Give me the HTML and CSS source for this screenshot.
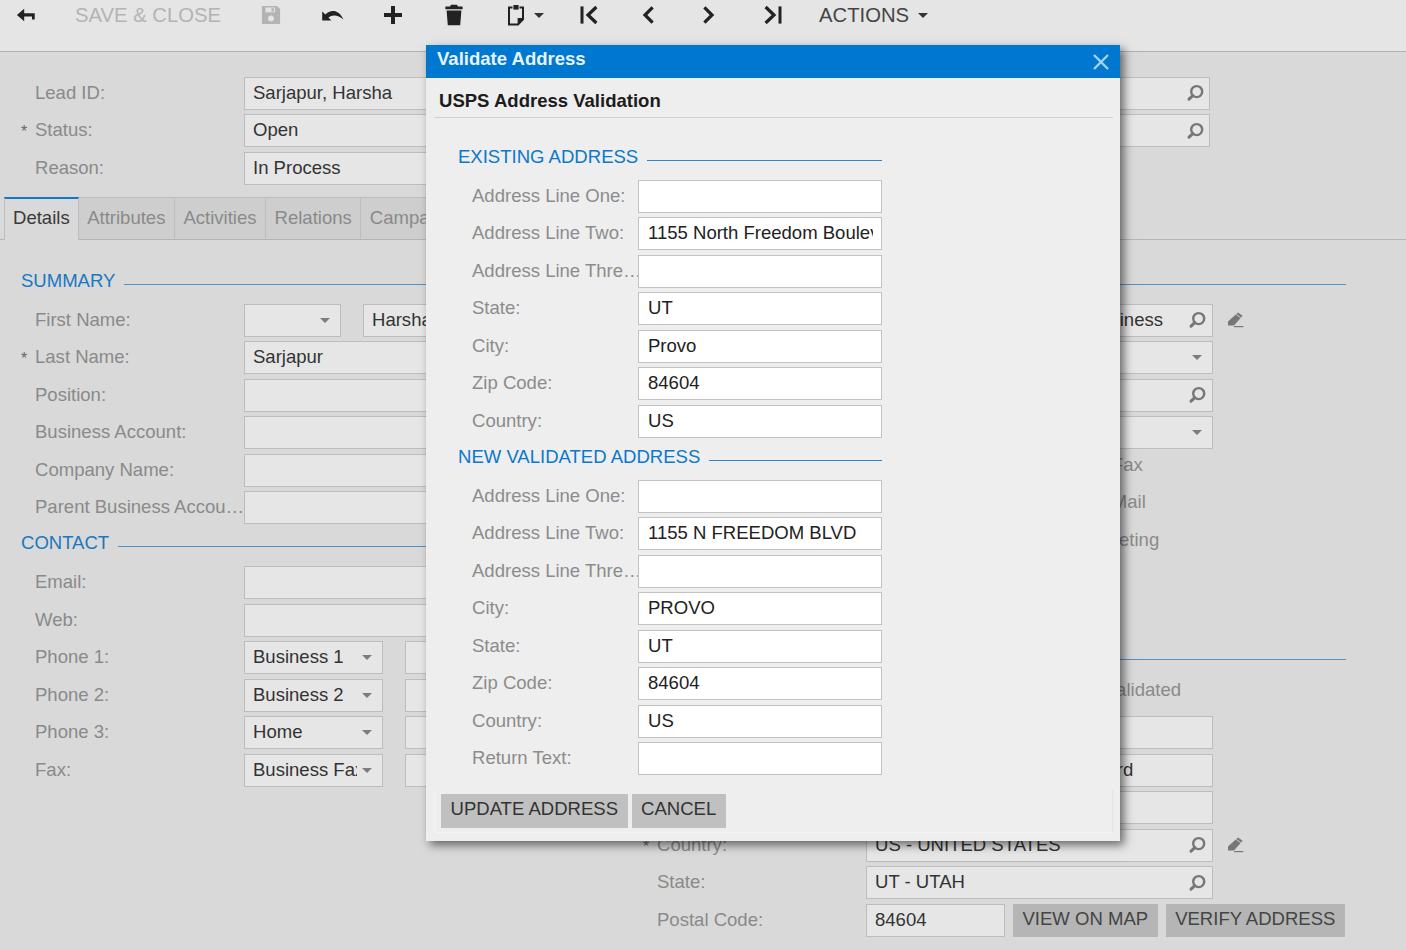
FILE: index.html
```html
<!DOCTYPE html>
<html lang="en">
<head>
<meta charset="utf-8">
<title>Lead - Validate Address</title>
<link rel="stylesheet" href="styles.css">
</head>
<body>
<svg class="defs" aria-hidden="true">
  <symbol id="i-search" viewBox="0 0 18 18"><circle cx="10.7" cy="7.6" r="5.5" fill="none" stroke="currentColor" stroke-width="2.4"/><path d="M6.8 11.6 3 15.2" stroke="currentColor" stroke-width="3" stroke-linecap="round" fill="none"/></symbol>
  <symbol id="i-pencil" viewBox="0 0 18 18"><path d="M12 1.4 16.6 4.8 8 14.6H2V10.6z" fill="currentColor"/><path d="M10.2 3.4 14.8 6.8" stroke="#d9d9d9" stroke-width=".9"/><path d="M8 15.6H17.4" stroke="currentColor" stroke-width="1.2"/></symbol>
  <symbol id="i-back" viewBox="0 0 22 16"><path d="M1 8 9 1.2V6H20.6V13H17.6V9.6H9V14.8z" fill="currentColor"/></symbol>
  <symbol id="i-save" viewBox="0 0 22 22"><path d="M1 1H17.5L21 4.5V21H1zM5 2.8V8H15.5V2.8zM11.5 3.6H14.3V7.2H11.5zM11 11.6A3.2 3.2 0 1 0 11 18A3.2 3.2 0 1 0 11 11.6z" fill="currentColor" fill-rule="evenodd"/></symbol>
  <symbol id="i-undo" viewBox="0 0 22 14"><path d="M.2 3.4V12.6H9.4L6.4 9.6C10 6.4 16 6.4 21.4 11.6 17.4 1.6 8.4 1 3.4 6.6z" fill="currentColor"/></symbol>
  <symbol id="i-plus" viewBox="0 0 20 20"><path d="M8 1H12V8H19V12H12V19H8V12H1V8H8z" fill="currentColor"/></symbol>
  <symbol id="i-trash" viewBox="0 0 18 22"><path d="M6 .8H12L13 2.6H17.6V5.2H.4V2.6H5zM1.6 6.6H16.4L15.2 21.2H2.8z" fill="currentColor"/></symbol>
  <symbol id="i-clip" viewBox="0 0 18 22"><path d="M5.5 3.4H2V20.4H11L16 15.4V3.4H12.5" fill="none" stroke="currentColor" stroke-width="2"/><path d="M6.4 1H11.6V5.6H6.4z" fill="currentColor"/><path d="M10.6 21V14H16.6z" fill="currentColor"/></symbol>
  <symbol id="i-first" viewBox="0 0 20 20"><path d="M2 1.4V18.6" stroke="currentColor" stroke-width="3" fill="none"/><path d="M16.4 2 8 10 16.4 18" stroke="currentColor" stroke-width="3.2" fill="none"/></symbol>
  <symbol id="i-prev" viewBox="0 0 14 20"><path d="M11.6 2.4 4 10 11.6 17.6" stroke="currentColor" stroke-width="3.2" fill="none"/></symbol>
  <symbol id="i-next" viewBox="0 0 14 20"><path d="M2.4 2.4 10 10 2.4 17.6" stroke="currentColor" stroke-width="3.2" fill="none"/></symbol>
  <symbol id="i-last" viewBox="0 0 20 20"><path d="M18 1.4V18.6" stroke="currentColor" stroke-width="3" fill="none"/><path d="M3.6 2 12 10 3.6 18" stroke="currentColor" stroke-width="3.2" fill="none"/></symbol>
  <symbol id="i-close" viewBox="0 0 18 18"><path d="M2 2 16 16M16 2 2 16" stroke="currentColor" stroke-width="2.4" fill="none"/></symbol>
</svg>

<header class="toolbar">
  <button class="tool tool-back"><svg class="ico-back"><use href="#i-back"/></svg></button>
  <button class="tool tool-text tool-save is-off">SAVE &amp; CLOSE</button>
  <button class="tool tool-disk is-off"><svg class="ico-disk"><use href="#i-save"/></svg></button>
  <button class="tool tool-undo"><svg class="ico-undo"><use href="#i-undo"/></svg></button>
  <button class="tool tool-plus"><svg class="ico-plus"><use href="#i-plus"/></svg></button>
  <button class="tool tool-trash"><svg class="ico-trash"><use href="#i-trash"/></svg></button>
  <button class="tool tool-clip"><svg class="ico-clip"><use href="#i-clip"/></svg><i class="caret caret-dark"></i></button>
  <button class="tool tool-first"><svg class="ico-nav"><use href="#i-first"/></svg></button>
  <button class="tool tool-prev"><svg class="ico-nav"><use href="#i-prev"/></svg></button>
  <button class="tool tool-next"><svg class="ico-nav"><use href="#i-next"/></svg></button>
  <button class="tool tool-last"><svg class="ico-nav"><use href="#i-last"/></svg></button>
  <button class="tool tool-text tool-actions">ACTIONS<i class="caret caret-dark"></i></button>
</header>

<main class="page">
  <section class="head-form">
    <div class="fields">
      <div class="row"><label class="label">Lead ID:</label><div class="box box-main"><span class="val">Sarjapur, Harsha</span></div></div>
      <div class="row"><label class="label req">Status:</label><div class="box box-main"><span class="val">Open</span></div></div>
      <div class="row"><label class="label">Reason:</label><div class="box box-main"><span class="val">In Process</span></div></div>
    </div>
    <div class="fields">
      <div class="row row-head-r"><div class="box box-head-r"><span class="val"></span><svg class="ico-search"><use href="#i-search"/></svg></div></div>
      <div class="row row-head-r"><div class="box box-head-r"><span class="val"></span><svg class="ico-search"><use href="#i-search"/></svg></div></div>
    </div>
  </section>

  <nav class="tabs">
    <a class="tab is-active">Details</a>
    <a class="tab">Attributes</a>
    <a class="tab">Activities</a>
    <a class="tab">Relations</a>
    <a class="tab">Campaigns</a>
  </nav>

  <section class="columns">
    <div class="col">
      <h3 class="sec"><span class="sec-text">SUMMARY</span><span class="sec-line"></span></h3>
      <div class="fields">
        <div class="row"><label class="label">First Name:</label><div class="box box-title"><span class="val"></span><i class="caret"></i></div><div class="box box-first"><span class="val">Harsha</span></div></div>
        <div class="row"><label class="label req">Last Name:</label><div class="box box-main"><span class="val">Sarjapur</span></div></div>
        <div class="row"><label class="label">Position:</label><div class="box box-main"></div></div>
        <div class="row"><label class="label">Business Account:</label><div class="box box-main"></div></div>
        <div class="row"><label class="label">Company Name:</label><div class="box box-main"></div></div>
        <div class="row"><label class="label">Parent Business Account:</label><div class="box box-main"></div></div>
      </div>
      <h3 class="sec sec-next"><span class="sec-text">CONTACT</span><span class="sec-line"></span></h3>
      <div class="fields">
        <div class="row"><label class="label">Email:</label><div class="box box-main"></div></div>
        <div class="row"><label class="label">Web:</label><div class="box box-main"></div></div>
        <div class="row"><label class="label">Phone 1:</label><div class="box box-phone"><span class="val">Business 1</span><i class="caret"></i></div><div class="box box-num"></div></div>
        <div class="row"><label class="label">Phone 2:</label><div class="box box-phone"><span class="val">Business 2</span><i class="caret"></i></div><div class="box box-num"></div></div>
        <div class="row"><label class="label">Phone 3:</label><div class="box box-phone"><span class="val">Home</span><i class="caret"></i></div><div class="box box-num"></div></div>
        <div class="row"><label class="label">Fax:</label><div class="box box-phone"><span class="val">Business Fax</span><i class="caret"></i></div><div class="box box-num"></div></div>
      </div>
    </div>

    <div class="col">
      <h3 class="sec"><span class="sec-line"></span></h3>
      <div class="fields">
        <div class="row"><label class="label"></label><div class="box box-wide"><span class="val val-right">Business</span><svg class="ico-search"><use href="#i-search"/></svg></div><svg class="ico-pencil"><use href="#i-pencil"/></svg></div>
        <div class="row"><label class="label"></label><div class="box box-wide"><span class="val"></span><i class="caret"></i></div></div>
        <div class="row"><label class="label"></label><div class="box box-wide"><span class="val"></span><svg class="ico-search"><use href="#i-search"/></svg></div></div>
        <div class="row"><label class="label"></label><div class="box box-wide"><span class="val"></span><i class="caret"></i></div></div>
        <div class="row row-check"><span class="check-text">Do Not Fax</span></div>
        <div class="row row-check"><span class="check-text">Do Not Mail</span></div>
        <div class="row row-check"><span class="check-text">No Marketing</span></div>
      </div>
      <h3 class="sec sec-addr"><span class="sec-line"></span></h3>
      <div class="fields">
        <div class="row row-check"><span class="check-text check-val">Address Validated</span></div>
        <div class="row"><label class="label"></label><div class="box box-wide"></div></div>
        <div class="row"><label class="label"></label><div class="box box-wide"><span class="val">1155 North Freedom Boulevard</span></div></div>
        <div class="row"><label class="label"></label><div class="box box-wide"></div></div>
        <div class="row"><label class="label req">Country:</label><div class="box box-wide"><span class="val">US - UNITED STATES</span><svg class="ico-search"><use href="#i-search"/></svg></div><svg class="ico-pencil"><use href="#i-pencil"/></svg></div>
        <div class="row"><label class="label">State:</label><div class="box box-wide"><span class="val">UT - UTAH</span><svg class="ico-search"><use href="#i-search"/></svg></div></div>
        <div class="row"><label class="label">Postal Code:</label><div class="box box-zip"><span class="val">84604</span></div><button class="btn btn-map">VIEW ON MAP</button><button class="btn btn-verify">VERIFY ADDRESS</button></div>
      </div>
    </div>
  </section>
</main>

<div class="modal" role="dialog">
  <div class="modal-head"><span class="modal-title">Validate Address</span><svg class="ico-close"><use href="#i-close"/></svg></div>
  <div class="modal-sub">USPS Address Validation</div>
  <div class="modal-body">
    <h3 class="msec"><span class="msec-text">EXISTING ADDRESS</span><span class="msec-line"></span></h3>
    <div class="fields">
      <div class="mrow"><label class="mlabel">Address Line One:</label><div class="mbox"></div></div>
      <div class="mrow"><label class="mlabel">Address Line Two:</label><div class="mbox"><span class="val">1155 North Freedom Boulevard</span></div></div>
      <div class="mrow"><label class="mlabel">Address Line Thre…</label><div class="mbox"></div></div>
      <div class="mrow"><label class="mlabel">State:</label><div class="mbox"><span class="val">UT</span></div></div>
      <div class="mrow"><label class="mlabel">City:</label><div class="mbox"><span class="val">Provo</span></div></div>
      <div class="mrow"><label class="mlabel">Zip Code:</label><div class="mbox"><span class="val">84604</span></div></div>
      <div class="mrow"><label class="mlabel">Country:</label><div class="mbox"><span class="val">US</span></div></div>
    </div>
    <h3 class="msec msec-next"><span class="msec-text">NEW VALIDATED ADDRESS</span><span class="msec-line"></span></h3>
    <div class="fields">
      <div class="mrow"><label class="mlabel">Address Line One:</label><div class="mbox"></div></div>
      <div class="mrow"><label class="mlabel">Address Line Two:</label><div class="mbox"><span class="val">1155 N FREEDOM BLVD</span></div></div>
      <div class="mrow"><label class="mlabel">Address Line Thre…</label><div class="mbox"></div></div>
      <div class="mrow"><label class="mlabel">City:</label><div class="mbox"><span class="val">PROVO</span></div></div>
      <div class="mrow"><label class="mlabel">State:</label><div class="mbox"><span class="val">UT</span></div></div>
      <div class="mrow"><label class="mlabel">Zip Code:</label><div class="mbox"><span class="val">84604</span></div></div>
      <div class="mrow"><label class="mlabel">Country:</label><div class="mbox"><span class="val">US</span></div></div>
      <div class="mrow"><label class="mlabel">Return Text:</label><div class="mbox"></div></div>
    </div>
  </div>
  <div class="modal-foot">
    <button class="mbtn">UPDATE ADDRESS</button>
    <button class="mbtn">CANCEL</button>
  </div>
</div>
</body>
</html>
```

FILE: styles.css
```css
* { box-sizing: border-box; }
html, body { margin: 0; height: 100%; }
body {
  position: relative;
  width: 1406px;
  height: 950px;
  overflow: hidden;
  background: #d9d9d9;
  font-family: "Liberation Sans", Arial, sans-serif;
  font-size: 18.55px;
  color: #333;
}
.defs { position: absolute; width: 0; height: 0; }
button { font: inherit; border: 0; background: none; padding: 0; color: inherit; }

/* toolbar */
.toolbar {
  display: flex;
  align-items: flex-start;
  height: 52px;
  background: #e5e5e5;
  border-bottom: 1px solid #b1b1b1;
  color: #222;
}
.tool { display: flex; align-items: center; justify-content: center; height: 30px; flex: none; }
.tool-text { font-size: 20.27px; color: #444; }
.is-off { color: #b4b4b4; }
.tool-back { width: 20px; margin-left: 16px; }
.tool-save { margin-left: 39px; width: 146px; color: #b4b4b4; white-space: nowrap; }
.tool-disk { width: 20px; margin-left: 40px; }
.tool-undo { width: 22px; margin-left: 41px; }
.tool-plus { width: 20px; margin-left: 39px; }
.tool-trash { width: 18px; margin-left: 42px; }
.tool-clip { width: 40px; margin-left: 44px; justify-content: flex-start; }
.tool-first { width: 20px; margin-left: 33px; }
.tool-prev { width: 14px; margin-left: 41px; }
.tool-next { width: 14px; margin-left: 47px; }
.tool-last { width: 20px; margin-left: 46px; }
.tool-actions { margin-left: 37px; color: #444; }
.ico-back { width: 22px; height: 16px; }
.ico-disk { width: 22px; height: 22px; }
.ico-undo { width: 22px; height: 14px; }
.ico-plus { width: 20px; height: 20px; }
.ico-trash { width: 18px; height: 22px; }
.ico-clip { width: 18px; height: 22px; }
.ico-nav { width: 20px; height: 20px; }
.tool-prev .ico-nav, .tool-next .ico-nav { width: 14px; }
.caret {
  display: block;
  width: 0; height: 0;
  flex: none;
  border-left: 5px solid transparent;
  border-right: 5px solid transparent;
  border-top: 5px solid #7d7d7d;
}
.caret-dark { border-top-color: #333; margin-left: 9px; }

/* generic form */
.head-form, .columns { display: grid; grid-template-columns: 612px 703px; column-gap: 10px; padding-left: 21px; }
.head-form { padding-top: 24.9px; height: 145px; }
.fields { display: flex; flex-direction: column; gap: 4.5px; }
.row { display: flex; align-items: center; height: 33px; flex: none; }
.label {
  position: relative;
  flex: none;
  width: 224px;
  margin-right: -1px;
  padding-left: 14px;
  padding-bottom: .8px;
  color: #8a8a8a;
  white-space: nowrap;
  overflow: hidden;
  text-overflow: ellipsis;
}
.req::before { content: "*"; position: absolute; left: 0; top: 4px; color: #666; font-size: 16px; }
.box {
  display: flex;
  align-items: center;
  height: 33px;
  flex: none;
  padding: 0 6px 0 8px;
  background: #e6e6e6;
  border: 1px solid #bdbdbd;
}
.val { flex: 1; min-width: 0; padding-bottom: .8px; white-space: nowrap; overflow: hidden; color: #333; }
.val-right { text-align: right; padding-right: 25px; }
.box-main { width: 389px; }
.box-title { width: 97px; padding-right: 10px; }
.box-first { width: 270px; margin-left: 22px; }
.box-phone { width: 139px; padding-right: 10px; }
.box-phone .val { margin-right: 5px; }
.box-num { width: 228px; margin-left: 22px; }
.box-wide { width: 347px; padding-right: 6px; }
.box-wide .caret { margin-right: 4px; }
.box-zip { width: 139px; }
.row-head-r { padding-left: 223px; }
.box-head-r { width: 344px; padding-right: 5px; }
.ico-search { width: 18px; height: 18px; color: #777; flex: none; }
.ico-pencil { width: 18px; height: 18px; color: #777; flex: none; margin-left: 13px; }

/* tabs */
.tabs { display: flex; height: 43px; padding-left: 4px; border-bottom: 1px solid #b5b5b5; }
.tab {
  height: 42px;
  padding: 9px 8.5px 0;
  background: #cecece;
  color: #8a8a8a;
  border-top: 1px solid #bdbdbd;
  border-right: 1px solid #bdbdbd;
  white-space: nowrap;
}
.tab.is-active {
  height: 43px;
  padding: 8px 8px 0;
  background: #d9d9d9;
  color: #3a3a3a;
  border-top: 2px solid #0f78c8;
  border-left: 1px solid #bdbdbd;
}

/* sections */
.columns { padding-top: 30px; }
.sec { display: flex; align-items: flex-start; height: 22px; margin: 0 0 11.9px; font: inherit; }
.sec-next { margin: 7.6px 0 12.1px; }
.sec-addr { margin-top: 83.1px; }
.sec-text { color: #1a78c2; margin-right: 9px; line-height: 22px; white-space: nowrap; }
.sec-line { flex: 1; height: 1px; margin-top: 14px; background: #4f93c9; }

.row-check { align-items: flex-start; padding-left: 406px; line-height: 21px; color: #8a8a8a; }
.check-val { margin-left: -17px; }

.btn {
  height: 33px;
  padding: 0 9.5px 3px;
  margin-left: 8px;
  background: #b5b5b5;
  color: #444;
  white-space: nowrap;
}

/* modal */
.modal {
  position: absolute;
  left: 426px;
  top: 45px;
  width: 694px;
  height: 796px;
  background: #eeeeee;
  box-shadow: 4px 4px 9px rgba(0, 0, 0, .55);
}
.modal-head {
  display: flex;
  align-items: center;
  justify-content: space-between;
  height: 33px;
  padding: 0 10px 0 11px;
  background: #0078cf;
}
.modal-title { font-weight: 700; color: #e6f3fc; margin-top: -5px; }
.ico-close { width: 18px; height: 18px; color: #a6d2f0; margin-top: 1px; }
.modal-sub {
  margin: 0 7px 0 8px;
  height: 40px;
  padding: 11.5px 0 0 5px;
  font-weight: 700;
  color: #1c1c1c;
  border-bottom: 1px solid #d2d2d2;
}
.modal-body { width: 456px; padding: 27px 0 0 32px; }
.msec { display: flex; align-items: flex-start; height: 22px; margin: 0 0 12.9px; font: inherit; }
.msec-next { margin: 7.6px 0 12.4px; }
.msec-text { color: #0a78cc; margin-right: 9px; padding-top: .5px; line-height: 22px; white-space: nowrap; }
.msec-line { flex: 1; height: 1px; margin-top: 15px; background: #2a87d0; }
.mrow { display: flex; align-items: center; height: 33px; flex: none; }
.mlabel {
  flex: none;
  width: 180px;
  padding-left: 14px;
  padding-bottom: .8px;
  color: #8c8c8c;
  white-space: nowrap;
  overflow: hidden;
}
.mbox {
  display: flex;
  align-items: center;
  flex: none;
  width: 244px;
  height: 33px;
  padding: 0 8px 0 9px;
  background: #fff;
  border: 1px solid #c2c2c2;
}
.mbox .val { color: #222; }
.modal-foot {
  display: flex;
  gap: 4px;
  margin: 15px 7px 0 8px;
  height: 43px;
  padding: 4px 0 0 6px;
  border-left: 1px solid #f3f3f3;
  border-right: 1px solid #e4e4e4;
  border-bottom: 1px solid #f4f4f4;
  border-radius: 0 0 3px 3px;
}
.mbtn {
  height: 34px;
  padding: 0 9.5px 4px;
  background: #c0c0c0;
  color: #333;
  white-space: nowrap;
}
```
